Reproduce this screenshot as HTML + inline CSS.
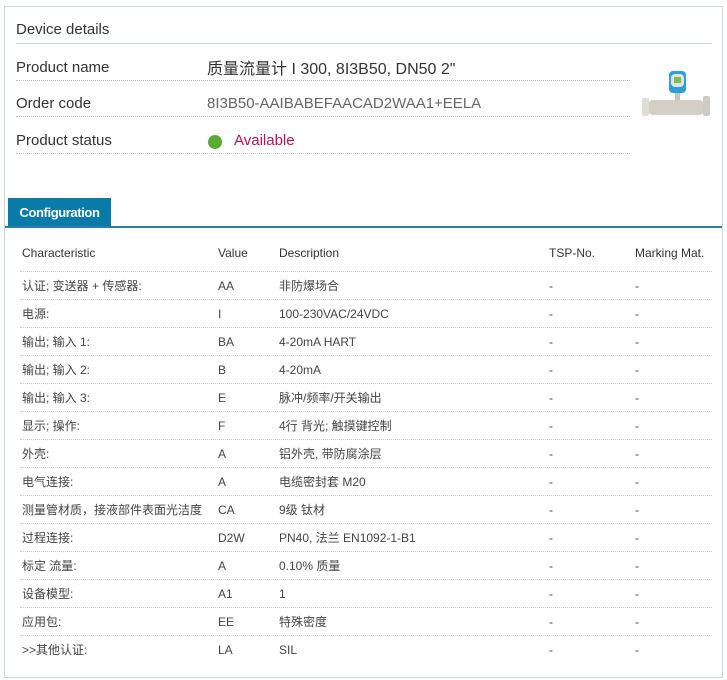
<!DOCTYPE html>
<html><head><meta charset="utf-8"><style>
*{margin:0;padding:0;box-sizing:border-box}
body{width:727px;height:680px;background:#fff;font-family:"Liberation Sans","Noto Sans CJK SC",sans-serif;position:relative;overflow:hidden;color:#333}
.frame{position:absolute;left:4px;top:6px;width:719px;height:672px;border:1px solid #cdd6dc}
.a{position:absolute;white-space:nowrap}
.lbl{font-size:15px;color:#333;left:16px}
.dl{position:absolute;left:16px;width:614px;border-top:1px dotted #bbb}
.tab{position:absolute;left:8px;top:198px;width:103px;height:29px;background:#0a7aa8;color:#fff;font-size:13px;font-weight:bold;line-height:29px;text-align:center;letter-spacing:-0.4px}
.bl{position:absolute;left:5px;top:226px;width:717px;height:2px;background:#2a7ea7}
.row{position:absolute;left:20px;width:692px;height:28px;font-size:12px;color:#444;line-height:28px;border-bottom:1px dotted #c4ccd2}
.row span{position:absolute;top:0}
.c1{left:2px}.c2{left:198px}.c3{left:259px}.c4{left:529px}.c5{left:615px}
</style></head><body>
<div class="frame"></div>
<div class="a lbl" style="top:21px">Device details</div>
<div style="position:absolute;left:16px;top:43px;width:696px;height:1px;background:#c8d2d8"></div>
<div class="a lbl" style="top:59px">Product name</div>
<div class="a" style="left:207px;top:55px;font-size:16px;color:#333">质量流量计 I 300, 8I3B50, DN50 2"</div>
<div class="dl" style="top:80px"></div>
<div class="a lbl" style="top:95px">Order code</div>
<div class="a" style="left:207px;top:95px;font-size:15px;color:#666">8I3B50-AAIBABEFAACAD2WAA1+EELA</div>
<div class="dl" style="top:116px"></div>
<div class="a lbl" style="top:132px">Product status</div>
<div class="a" style="left:208px;top:135px;width:14px;height:14px;border-radius:50%;background:#5aab32"></div>
<div class="a" style="left:234px;top:132px;font-size:15px;color:#b5145a">Available</div>
<div class="dl" style="top:153px"></div>
<svg class="a" style="left:638px;top:68px" width="76" height="56" viewBox="0 0 76 56">
<rect x="31" y="3" width="17" height="22" rx="4" fill="#2d9fd9"/>
<rect x="33" y="6" width="13" height="13" rx="4" fill="#dfe4ea"/>
<rect x="36" y="9" width="7" height="6" fill="#7bc043"/>
<rect x="37" y="25" width="5" height="9" fill="#c8c4bc"/>
<rect x="10" y="32" width="56" height="15" rx="5" fill="#d3cec6"/>
<rect x="4" y="30" width="7" height="18" rx="2" fill="#e0dcd6"/>
<rect x="65" y="28" width="7" height="20" rx="2" fill="#cfcac3"/>
</svg>
<div class="tab">Configuration</div>
<div class="bl"></div>
<div class="row" style="top:244px;font-size:12px;color:#333;line-height:18px;height:28px"><span class="c1">Characteristic</span><span class="c2">Value</span><span class="c3">Description</span><span class="c4">TSP-No.</span><span class="c5">Marking Mat.</span></div>
<div class="row" style="top:272px"><span class="c1">认证; 变送器 + 传感器:</span><span class="c2">AA</span><span class="c3">非防爆场合</span><span class="c4">-</span><span class="c5">-</span></div>
<div class="row" style="top:300px"><span class="c1">电源:</span><span class="c2">I</span><span class="c3">100-230VAC/24VDC</span><span class="c4">-</span><span class="c5">-</span></div>
<div class="row" style="top:328px"><span class="c1">输出; 输入 1:</span><span class="c2">BA</span><span class="c3">4-20mA HART</span><span class="c4">-</span><span class="c5">-</span></div>
<div class="row" style="top:356px"><span class="c1">输出; 输入 2:</span><span class="c2">B</span><span class="c3">4-20mA</span><span class="c4">-</span><span class="c5">-</span></div>
<div class="row" style="top:384px"><span class="c1">输出; 输入 3:</span><span class="c2">E</span><span class="c3">脉冲/频率/开关输出</span><span class="c4">-</span><span class="c5">-</span></div>
<div class="row" style="top:412px"><span class="c1">显示; 操作:</span><span class="c2">F</span><span class="c3">4行 背光; 触摸键控制</span><span class="c4">-</span><span class="c5">-</span></div>
<div class="row" style="top:440px"><span class="c1">外壳:</span><span class="c2">A</span><span class="c3">铝外壳, 带防腐涂层</span><span class="c4">-</span><span class="c5">-</span></div>
<div class="row" style="top:468px"><span class="c1">电气连接:</span><span class="c2">A</span><span class="c3">电缆密封套 M20</span><span class="c4">-</span><span class="c5">-</span></div>
<div class="row" style="top:496px"><span class="c1">测量管材质，接液部件表面光洁度</span><span class="c2">CA</span><span class="c3">9级 钛材</span><span class="c4">-</span><span class="c5">-</span></div>
<div class="row" style="top:524px"><span class="c1">过程连接:</span><span class="c2">D2W</span><span class="c3">PN40, 法兰 EN1092-1-B1</span><span class="c4">-</span><span class="c5">-</span></div>
<div class="row" style="top:552px"><span class="c1">标定 流量:</span><span class="c2">A</span><span class="c3">0.10% 质量</span><span class="c4">-</span><span class="c5">-</span></div>
<div class="row" style="top:580px"><span class="c1">设备模型:</span><span class="c2">A1</span><span class="c3">1</span><span class="c4">-</span><span class="c5">-</span></div>
<div class="row" style="top:608px"><span class="c1">应用包:</span><span class="c2">EE</span><span class="c3">特殊密度</span><span class="c4">-</span><span class="c5">-</span></div>
<div class="row" style="top:636px;border-bottom:none"><span class="c1">&gt;&gt;其他认证:</span><span class="c2">LA</span><span class="c3">SIL</span><span class="c4">-</span><span class="c5">-</span></div>
</body></html>
